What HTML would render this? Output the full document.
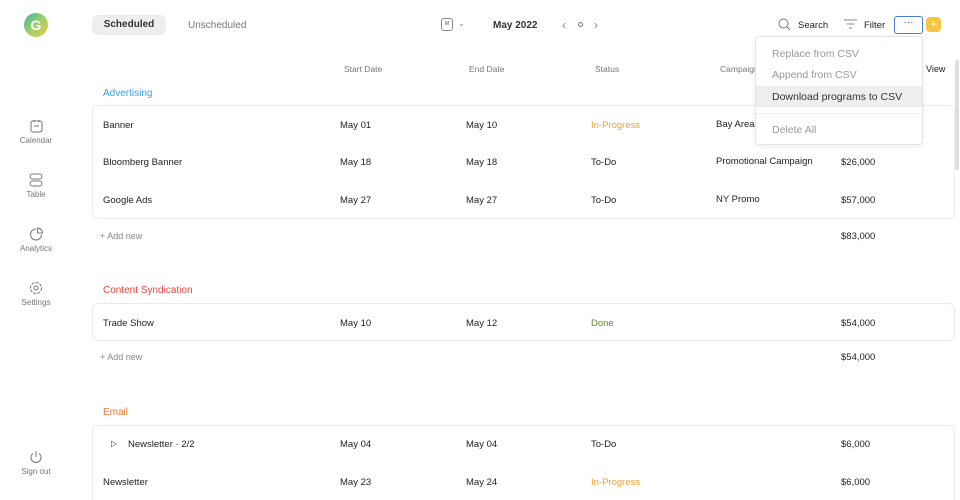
<!DOCTYPE html>
<html style="overflow:hidden;width:960px;height:500px"><head><style>
*{box-sizing:border-box;margin:0;padding:0}
body{width:960px;height:500px;overflow:hidden;background:#fff;font-family:"Liberation Sans",sans-serif;color:#222;position:relative;font-size:9.5px}
.a{position:absolute;white-space:nowrap}
.nav{position:absolute;left:0;width:72px;text-align:center;color:#777;font-size:8px}
.nav svg{display:block;margin:0 auto 3px}
.card{position:absolute;left:92px;width:863px;border:1px solid #ececec;border-radius:6px;background:#fff}
.hdr{color:#777;font-size:8.5px}
.sec{font-size:10px}
.add{color:#888;font-size:9px}
</style></head><body>
<div class="a" style="left:24px;top:13px;width:24px;height:24px;border-radius:50%;background:linear-gradient(135deg,#3fb59a,#9fcf6a 50%,#ecc956);color:#fff;font-weight:bold;font-size:14px;text-align:center;line-height:24px">G</div>
<div class="a" style="left:92px;top:15px;width:74px;height:20px;background:#eee;border-radius:6px;font-size:10px;text-align:center;line-height:20px;font-weight:bold;color:#333">Scheduled</div>
<div class="a" style="left:188px;top:20px;font-size:10px;color:#777">Unscheduled</div>
<div class="a" style="left:441px;top:18px;width:12px;height:13px;border:1px solid #888;border-radius:3px;font-size:5px;text-align:center;line-height:11px;color:#555">M</div>
<div class="a" style="left:458px;top:19px;font-size:8px;color:#888">⌄</div>
<div class="a" style="left:493px;top:20px;font-size:10px;font-weight:bold;color:#333">May 2022</div>
<div class="a" style="left:562px;top:18px;font-size:12px;color:#888">‹</div>
<div class="a" style="left:578px;top:22px;width:5px;height:5px;border:1px solid #777;border-radius:50%"></div>
<div class="a" style="left:594px;top:18px;font-size:12px;color:#888">›</div>
<svg class="a" style="left:778px;top:18px" width="13" height="13" viewBox="0 0 13 13"><circle cx="5.5" cy="5.5" r="4.5" fill="none" stroke="#777" stroke-width="1"/><path d="M9 9l3 3" stroke="#777"/></svg>
<div class="a" style="left:798px;top:20px;font-size:9.5px">Search</div>
<svg class="a" style="left:844px;top:19px" width="13" height="10"><path d="M0 1h13M2.5 5h8M5 9h3" stroke="#888"/></svg>
<div class="a" style="left:864px;top:20px;font-size:9.5px">Filter</div>
<div class="a" style="left:894px;top:16px;width:29px;height:18px;border:1.5px solid #4a7fd8;border-radius:3px;text-align:center;line-height:12px;color:#555;font-size:10px">···</div>
<div class="a" style="left:926px;top:17px;width:15px;height:15px;background:#f4c542;border-radius:4px;color:#fff;text-align:center;line-height:15px;font-size:12px">+</div>

<div class="nav" style="top:119px"><svg width="13" height="14"><rect x="1" y="2" width="11" height="11" rx="2" fill="none" stroke="#777"/><path d="M4 7h5M4 1v2M9 1v2" stroke="#777"/></svg>Calendar</div>
<div class="nav" style="top:173px"><svg width="14" height="14"><rect x="1" y="1" width="12" height="5" rx="2.5" fill="none" stroke="#777"/><rect x="1" y="8" width="12" height="5" rx="2.5" fill="none" stroke="#777"/></svg>Table</div>
<div class="nav" style="top:227px"><svg width="14" height="14"><path d="M7 2A5.5 5.5 0 1 0 12.5 7.5" fill="none" stroke="#777"/><path d="M8.5 1v5h5A5 5 0 0 0 8.5 1z" fill="none" stroke="#777"/></svg>Analytics</div>
<div class="nav" style="top:281px"><svg width="14" height="14"><circle cx="7" cy="7" r="5.5" fill="none" stroke="#777" stroke-dasharray="3 1.2"/><circle cx="7" cy="7" r="2" fill="none" stroke="#777"/></svg>Settings</div>
<div class="nav" style="top:450px"><svg width="14" height="14"><path d="M4 3.5A5 5 0 1 0 10 3.5" fill="none" stroke="#777"/><path d="M7 1v6" stroke="#777"/></svg>Sign out</div>

<div class="a hdr" style="left:344px;top:64px">Start Date</div>
<div class="a hdr" style="left:469px;top:64px">End Date</div>
<div class="a hdr" style="left:595px;top:64px">Status</div>
<div class="a hdr" style="left:720px;top:64px">Campaign</div>
<div class="a" style="left:926px;top:64px;font-size:9px">View</div>

<div class="a sec" style="left:103px;top:88px;color:#3a9fe6">Advertising</div>
<div class="card" style="top:105px;height:114px"></div>
<div class="a" style="left:103px;top:120px">Banner</div><div class="a" style="left:340px;top:120px">May 01</div><div class="a" style="left:466px;top:120px">May 10</div><div class="a" style="left:591px;top:120px;color:#f0a23c">In-Progress</div><div class="a" style="left:716px;top:119px">Bay Area</div>
<div class="a" style="left:103px;top:157px">Bloomberg Banner</div><div class="a" style="left:340px;top:157px">May 18</div><div class="a" style="left:466px;top:157px">May 18</div><div class="a" style="left:591px;top:157px">To-Do</div><div class="a" style="left:716px;top:156px">Promotional Campaign</div><div class="a" style="left:841px;top:157px">$26,000</div>
<div class="a" style="left:103px;top:195px">Google Ads</div><div class="a" style="left:340px;top:195px">May 27</div><div class="a" style="left:466px;top:195px">May 27</div><div class="a" style="left:591px;top:195px">To-Do</div><div class="a" style="left:716px;top:194px">NY Promo</div><div class="a" style="left:841px;top:195px">$57,000</div>
<div class="a add" style="left:100px;top:231px">+ Add new</div><div class="a" style="left:841px;top:231px">$83,000</div>

<div class="a sec" style="left:103px;top:285px;color:#e8463c">Content Syndication</div>
<div class="card" style="top:303px;height:38px"></div>
<div class="a" style="left:103px;top:318px">Trade Show</div><div class="a" style="left:340px;top:318px">May 10</div><div class="a" style="left:466px;top:318px">May 12</div><div class="a" style="left:591px;top:318px;color:#5a8a2a">Done</div><div class="a" style="left:841px;top:318px">$54,000</div>
<div class="a add" style="left:100px;top:352px">+ Add new</div><div class="a" style="left:841px;top:352px">$54,000</div>

<div class="a sec" style="left:103px;top:407px;color:#f07a3a">Email</div>
<div class="card" style="top:425px;height:75px;border-bottom:none;border-radius:6px 6px 0 0"></div>
<div class="a" style="left:111px;top:439px;font-size:8px">▷</div>
<div class="a" style="left:128px;top:439px">Newsletter · 2/2</div><div class="a" style="left:340px;top:439px">May 04</div><div class="a" style="left:466px;top:439px">May 04</div><div class="a" style="left:591px;top:439px">To-Do</div><div class="a" style="left:841px;top:439px">$6,000</div>
<div class="a" style="left:103px;top:477px">Newsletter</div><div class="a" style="left:340px;top:477px">May 23</div><div class="a" style="left:466px;top:477px">May 24</div><div class="a" style="left:591px;top:477px;color:#f0a23c">In-Progress</div><div class="a" style="left:841px;top:477px">$6,000</div>
<div class="a" style="left:955px;top:60px;width:4px;height:110px;background:#ddd;border-radius:2px"></div>

<div class="a" style="left:755px;top:36px;width:168px;height:109px;background:#fff;border:1px solid #e4e4e4;border-radius:4px;box-shadow:0 2px 6px rgba(0,0,0,.06)">
<div class="a" style="left:16px;top:11px;font-size:10.5px;color:#999">Replace from CSV</div>
<div class="a" style="left:16px;top:32px;font-size:10.5px;color:#999">Append from CSV</div>
<div class="a" style="left:0;top:49px;width:166px;height:21px;background:#eee"></div>
<div class="a" style="left:16px;top:54px;font-size:10.5px;color:#333">Download programs to CSV</div>
<div class="a" style="left:0;top:76px;width:166px;height:1px;background:#eee"></div>
<div class="a" style="left:16px;top:87px;font-size:10.5px;color:#999">Delete All</div>
</div>
</body></html>
